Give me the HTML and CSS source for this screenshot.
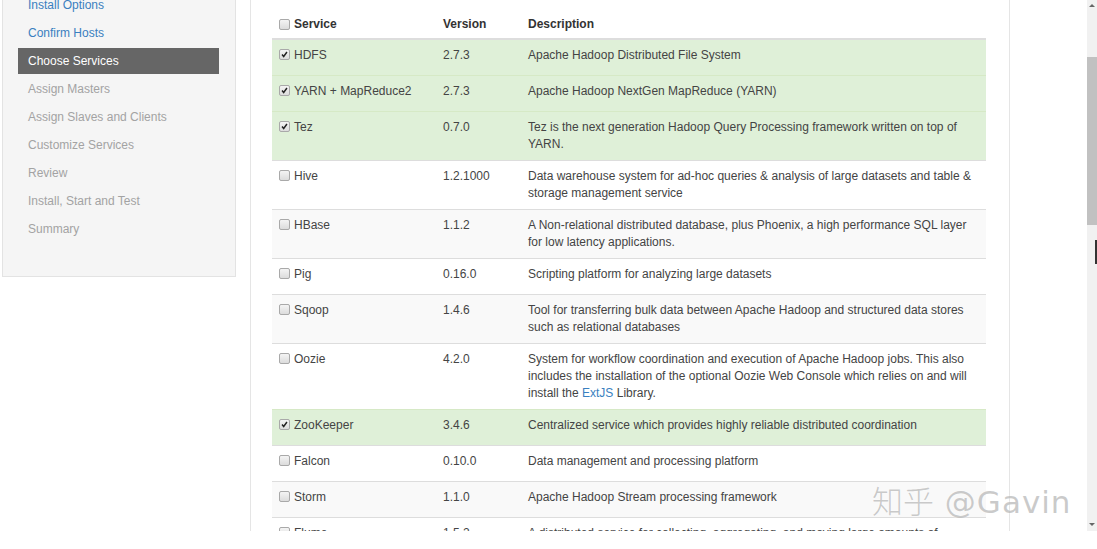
FILE: index.html
```html
<!DOCTYPE html>
<html>
<head>
    <title>Install Wizard - Choose Services</title>
    <link rel="stylesheet" href="styles.css">
</head>
<body>
    <div class="viewport">
        <div class="page">
            <div class="wizard">
                <!-- steps on the left -->
                <div class="steps">
                    <a class="step done">Install Options</a>
                    <a class="step done">Confirm Hosts</a>
                    <a class="step active">Choose Services</a>
                    <a class="step">Assign Masters</a>
                    <a class="step">Assign Slaves and Clients</a>
                    <a class="step">Customize Services</a>
                    <a class="step">Review</a>
                    <a class="step">Install, Start and Test</a>
                    <a class="step">Summary</a>
                </div>

                <!-- service table -->
                <div class="content">
                    <table class="services">
                        <colgroup>
                            <col class="col-name">
                            <col class="col-version">
                            <col>
                        </colgroup>
                        <thead>
                            <tr>
                                <th><span class="cb"></span>Service</th>
                                <th>Version</th>
                                <th>Description</th>
                            </tr>
                        </thead>
                        <tbody>
                            <tr class="picked">
                                <td><div class="name"><span class="cb on"><svg viewBox="0 0 11 11"><path d="M2.5 5.5 L4.5 8 L8.5 2.5"/></svg></span>HDFS</div></td>
                                <td>2.7.3</td>
                                <td>Apache Hadoop Distributed File System</td>
                            </tr>
                            <tr class="picked">
                                <td><div class="name"><span class="cb on"><svg viewBox="0 0 11 11"><path d="M2.5 5.5 L4.5 8 L8.5 2.5"/></svg></span>YARN + MapReduce2</div></td>
                                <td>2.7.3</td>
                                <td>Apache Hadoop NextGen MapReduce (YARN)</td>
                            </tr>
                            <tr class="picked">
                                <td><div class="name"><span class="cb on"><svg viewBox="0 0 11 11"><path d="M2.5 5.5 L4.5 8 L8.5 2.5"/></svg></span>Tez</div></td>
                                <td>0.7.0</td>
                                <td>Tez is the next generation Hadoop Query Processing framework written on top of YARN.</td>
                            </tr>
                            <tr>
                                <td><div class="name"><span class="cb"></span>Hive</div></td>
                                <td>1.2.1000</td>
                                <td>Data warehouse system for ad-hoc queries &amp; analysis of large datasets and table &amp; storage management service</td>
                            </tr>
                            <tr>
                                <td><div class="name"><span class="cb"></span>HBase</div></td>
                                <td>1.1.2</td>
                                <td>A Non-relational distributed database, plus Phoenix, a high performance SQL layer for low latency applications.</td>
                            </tr>
                            <tr>
                                <td><div class="name"><span class="cb"></span>Pig</div></td>
                                <td>0.16.0</td>
                                <td>Scripting platform for analyzing large datasets</td>
                            </tr>
                            <tr>
                                <td><div class="name"><span class="cb"></span>Sqoop</div></td>
                                <td>1.4.6</td>
                                <td>Tool for transferring bulk data between Apache Hadoop and structured data stores such as relational databases</td>
                            </tr>
                            <tr>
                                <td><div class="name"><span class="cb"></span>Oozie</div></td>
                                <td>4.2.0</td>
                                <td>System for workflow coordination and execution of Apache Hadoop jobs. This also includes the installation of the optional Oozie Web Console which relies on and will install the <a class="link">ExtJS</a> Library.</td>
                            </tr>
                            <tr class="picked">
                                <td><div class="name"><span class="cb on"><svg viewBox="0 0 11 11"><path d="M2.5 5.5 L4.5 8 L8.5 2.5"/></svg></span>ZooKeeper</div></td>
                                <td>3.4.6</td>
                                <td>Centralized service which provides highly reliable distributed coordination</td>
                            </tr>
                            <tr>
                                <td><div class="name"><span class="cb"></span>Falcon</div></td>
                                <td>0.10.0</td>
                                <td>Data management and processing platform</td>
                            </tr>
                            <tr>
                                <td><div class="name"><span class="cb"></span>Storm</div></td>
                                <td>1.1.0</td>
                                <td>Apache Hadoop Stream processing framework</td>
                            </tr>
                            <tr>
                                <td><div class="name"><span class="cb"></span>Flume</div></td>
                                <td>1.5.2</td>
                                <td>A distributed service for collecting, aggregating, and moving large amounts of streaming data into HDFS</td>
                            </tr>
                        </tbody>
                    </table>
                </div>
            </div>
        </div>

        <!-- fake window scrollbar -->
        <div class="scrollbar">
            <div class="arrow up"></div>
            <div class="track">
                <div class="thumb"></div>
                <div class="mark"></div>
            </div>
            <div class="arrow down"></div>
        </div>

        <div class="watermark">知乎 <span class="handle">@Gavin</span></div>
    </div>
</body>
</html>
```

FILE: styles.css
```css
body {
    margin: 0;
    padding: 0;
    background: #fff;
    font-family: "Liberation Sans", Arial, sans-serif;
    font-size: 12px;
    line-height: 17px;
    color: #444;
}

.viewport {
    position: relative;
    height: 531px;
    overflow: hidden;
    display: flex;
}

.page {
    flex: 1;
    overflow: hidden;
}

.wizard {
    display: flex;
    align-items: flex-start;
    margin-top: -24px;
}

/* left steps */
.steps {
    width: 201px;
    margin-left: 2px;
    padding: 15px 16px 34px 15px;
    background: #f5f5f5;
    border: 1px solid #e3e3e3;
    display: flex;
    flex-direction: column;
    gap: 2px;
}

.step {
    display: block;
    height: 26px;
    line-height: 26px;
    padding-left: 10px;
    color: #a3a3a3;
}

.step.done {
    color: #3a7fc0;
}

.step.active {
    background: #666;
    color: #fff;
}

/* main panel */
.content {
    width: 714px;
    margin-left: 14px;
    padding: 30px 23px 40px 21px;
    border: 1px solid #e5e5e5;
    background: #fff;
}

.services {
    width: 714px;
    border-collapse: collapse;
    table-layout: fixed;
}

.col-name {
    width: 164px;
}

.col-version {
    width: 85px;
}

.services th {
    text-align: left;
    font-weight: bold;
    color: #333;
    padding: 9px 7px 5px 7px;
    border-bottom: 2px solid #ddd;
}

.services td {
    padding: 7px;
    vertical-align: top;
    border-top: 1px solid #ddd;
}

.name {
    min-height: 21px;
}

.services tbody tr:nth-child(odd) {
    background: #f9f9f9;
}

.services tbody tr.picked {
    background: #dff0d8;
}

.services tbody tr.picked td {
    border-top-color: #d6e9c6;
}

.link {
    color: #3a7fc0;
}

/* checkbox look */
.cb {
    display: inline-block;
    width: 9px;
    height: 9px;
    margin-right: 4px;
    vertical-align: -1px;
    border: 1px solid #a9a9a9;
    border-radius: 2px;
    background: linear-gradient(#f4f4f4, #dcdcdc);
}

.cb svg {
    display: block;
    width: 9px;
    height: 9px;
}

.cb svg path {
    fill: none;
    stroke: #222;
    stroke-width: 1.8;
}

.services th .cb {
    vertical-align: -2px;
}

/* scrollbar */
.scrollbar {
    width: 10px;
    margin-left: 1px;
    background: #f1f1f1;
    display: flex;
    flex-direction: column;
}

.arrow {
    height: 12px;
    position: relative;
}

.arrow:after {
    content: "";
    position: absolute;
    left: 2px;
    border-left: 3px solid transparent;
    border-right: 3px solid transparent;
}

.arrow.up:after {
    top: 4px;
    border-bottom: 3px solid #666;
}

.arrow.down:after {
    top: 4px;
    border-top: 3px solid #666;
}

.track {
    flex: 1;
    display: flex;
    flex-direction: column;
    align-items: flex-end;
}

.thumb {
    width: 10px;
    height: 168px;
    margin-top: 45px;
    background: #c1c1c1;
}

.mark {
    width: 2px;
    height: 24px;
    margin-top: 15px;
    background: #333;
}

.watermark {
    position: absolute;
    left: 872px;
    top: 481px;
    font-family: "Noto Sans CJK SC", "DejaVu Sans", sans-serif;
    font-size: 31px;
    font-weight: 300;
    line-height: 38px;
    color: rgba(150, 150, 150, 0.5);
    text-shadow: 0 0 2px rgba(255, 255, 255, 0.8);
}

.watermark .handle {
    font-family: "DejaVu Sans", sans-serif;
    font-weight: normal;
    letter-spacing: 1px;
    margin-left: 4px;
}
```
